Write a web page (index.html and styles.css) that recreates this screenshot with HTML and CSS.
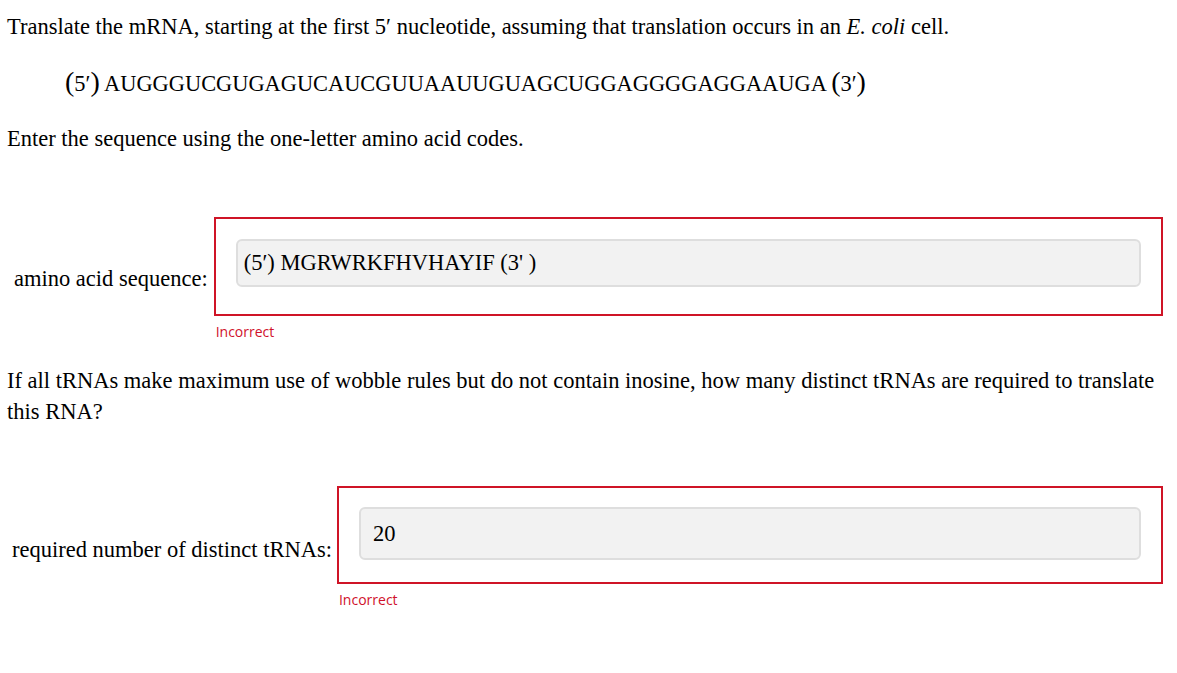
FILE: index.html
```html
<!DOCTYPE html>
<html lang="en">
<head>
  <meta charset="UTF-8" />
  <meta name="viewport" content="width=device-width, initial-scale=1.0">
  <title>mRNA translation</title>
  <link rel="stylesheet" href="styles.css">
</head>
<body>
  <p class="prompt first">Translate the mRNA, starting at the first 5′ nucleotide, assuming that translation occurs in an <i>E. coli</i> cell.</p>

  <p class="formula"><span class="paren">(</span>5′<span class="paren">)</span> AUGGGUCGUGAGUCAUCGUUAAUUGUAGCUGGAGGGGAGGAAUGA <span class="paren">(</span>3′<span class="paren">)</span></p>

  <p class="prompt">Enter the sequence using the one-letter amino acid codes.</p>

  <div class="question q-seq">
    <label class="q-label" for="seqInput">amino acid sequence:</label>
    <div class="answer">
      <div class="answer-box">
        <input class="answer-input" id="seqInput" type="text" value="(5′) MGRWRKFHVHAYIF (3' )" readonly>
      </div>
      <div class="feedback">Incorrect</div>
    </div>
  </div>

  <p class="prompt">If all tRNAs make maximum use of wobble rules but do not contain inosine, how many distinct tRNAs are required to translate this RNA?</p>

  <div class="question q-num">
    <label class="q-label" for="numInput">required number of distinct tRNAs:</label>
    <div class="answer">
      <div class="answer-box">
        <input class="answer-input" id="numInput" type="text" value="20" readonly>
      </div>
      <div class="feedback">Incorrect</div>
    </div>
  </div>
</body>
</html>
```

FILE: styles.css
```css
* {
  box-sizing: border-box;
}

body {
  font-family: 'Liberation Serif', 'Times New Roman', serif;
  font-size: 22.5px;
  line-height: 31px;
  color: #000;
  background: #fff;
  margin: 0;
  padding: 0 14px 0 7px;
}

.prompt {
  margin: 24px 0 0;
}

.prompt.first {
  margin-top: 11px;
}

.formula {
  margin: 24px 0 0 58px;
  font-size: 22.4px;
}

.paren {
  font-size: 28px;
  font-weight: 300;
}

.question {
  display: flex;
  align-items: flex-start;
  margin-top: 63px;
}

.q-num {
  margin-top: 59px;
}

.q-label {
  padding: 0 6px 0 7px;
  align-self: flex-start;
}

.q-seq .q-label {
  margin-top: 46px;
}

.q-num .q-label {
  margin-top: 48px;
  padding: 0 5px 0 5px;
}

.answer {
  flex: 1;
}

.answer-box {
  border: 2px solid #cf1426;
  padding: 20px 20px 27px;
}

.q-num .answer-box {
  padding: 19px 20px 22px;
}

.answer-input {
  display: block;
  width: 100%;
  height: 48px;
  font-family: inherit;
  font-size: 22.5px;
  color: #000;
  background: #f2f2f2;
  border: 2px solid #dedede;
  border-radius: 6px;
  padding: 0 6px;
  outline: none;
}

.q-num .answer-input {
  height: 53px;
  padding: 0 12px;
}

.feedback {
  font-family: 'Open Sans', 'Noto Sans', sans-serif;
  font-size: 14px;
  line-height: 18px;
  color: #d0112b;
  padding: 7px 0 0 2px;
}
```
